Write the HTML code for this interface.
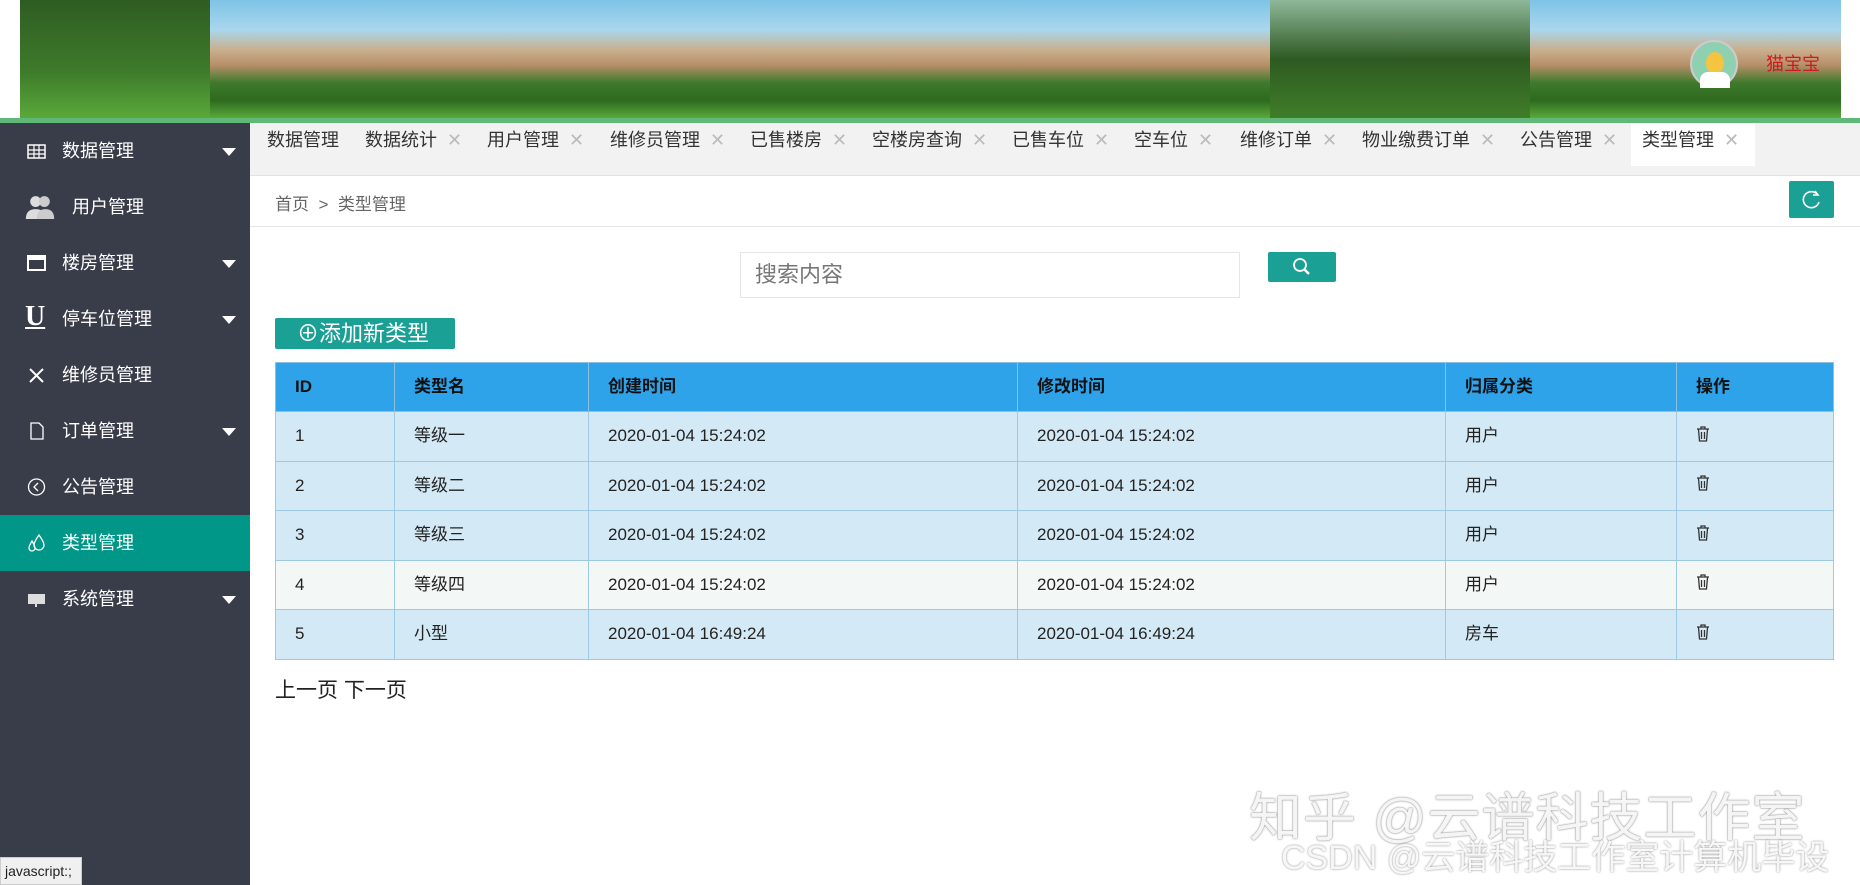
<!DOCTYPE html>
<html><head><meta charset="utf-8"><style>
*{margin:0;padding:0;box-sizing:border-box}
body{width:1860px;height:885px;overflow:hidden;background:#fff;font-family:"Liberation Sans","Noto Sans CJK SC",sans-serif;position:relative}
.hdr{position:absolute;left:20px;top:0;width:1821px;height:118px;background:linear-gradient(180deg,#7ec3e6 0%,#a9d7ee 25%,#c9b08e 42%,#b88f6a 55%,#3f7a2c 70%,#2e6a1e 85%,#5aa83a 100%)}
.hdr .t1{position:absolute;left:0;top:0;width:190px;height:118px;background:linear-gradient(180deg,#2f5c22,#3d7a2a 60%,#5aa83a)}
.hdr .t2{position:absolute;left:1250px;top:0;width:260px;height:118px;background:linear-gradient(180deg,#8fb79a,#2e5a22 50%,#3f7d28)}
.green{position:absolute;left:0;top:118px;width:1860px;height:5px;background:#5fb878}
.side{position:absolute;left:0;top:123px;width:250px;height:762px;background:#393d49}
.si{position:absolute;left:0;width:250px;height:56px;color:#fff;font-size:18px;line-height:56px;padding-left:62px}
.si.act{background:#009688}
.si .ic{position:absolute;left:27px;top:19px;width:19px;height:18px}
.si .ar{position:absolute;right:14px;top:25px;width:0;height:0;border-left:7px solid transparent;border-right:7px solid transparent;border-top:8px solid #fff}
.tabs{position:absolute;left:250px;top:123px;width:1610px;height:53px;background:#f2f2f2;border-bottom:1px solid #e2e2e2}
.tab{position:absolute;top:0;height:43px;line-height:34px;font-size:18px;color:#333}
.tab .x{color:#bbb;margin-left:10px;font-size:18px}
.tab.on{background:#fff}
.bc{position:absolute;left:275px;top:190px;font-size:17px;color:#666}
.line2{position:absolute;left:250px;top:226px;width:1610px;height:1px;background:#e6e6e6}
.ref{position:absolute;left:1789px;top:181px;width:45px;height:37px;background:#1aa094;border-radius:2px}
.inp{position:absolute;left:740px;top:252px;width:500px;height:46px;border:1px solid #e6e6e6;font-size:22px;color:#777;line-height:44px;padding-left:14px}
.sb{position:absolute;left:1268px;top:252px;width:68px;height:30px;background:#1aa094;border-radius:2px}
.add{position:absolute;left:275px;top:318px;width:180px;height:31px;background:#1aa094;color:#fff;font-size:22px;line-height:31px;padding-left:22px;border-radius:2px}
table{position:absolute;left:275px;top:362px;width:1559px;border-collapse:collapse;font-size:17px}
th,td{line-height:20px;vertical-align:middle}
th{background:#2ea3ea;color:#111;height:49px;text-align:left;padding-left:19px;border:1px solid #8cc0e0;font-weight:bold}
td{height:49.5px;padding-left:19px;border:1px solid #9ec9e2;color:#222;background:#d4e9f6}
tr.w td{background:#f3f8f7}
.pg{position:absolute;left:275px;top:674px;font-size:21px;color:#222}
.wm{position:absolute;left:1249px;top:776px;font-size:53px;color:rgba(255,255,255,.9);text-shadow:0 0 2px #999,0 0 1px #777;letter-spacing:1px;white-space:nowrap}
.wm2{position:absolute;left:1281px;top:830px;font-size:34px;color:rgba(255,255,255,.9);text-shadow:0 0 2px #888;white-space:nowrap}
.st{position:absolute;left:0;top:857px;height:28px;width:82px;background:#f0f0f0;border:1px solid #ccc;font-size:14px;line-height:26px;padding-left:4px;color:#222}
</style></head><body>
<div class="hdr"><div class="t1"></div><div class="t2"></div>
<div style="position:absolute;left:1670px;top:40px;width:48px;height:48px;border-radius:50%;background:#8fd0b0;border:2px solid #ccc"><div style="position:absolute;left:14px;top:10px;width:18px;height:22px;border-radius:50%;background:#f5c542"></div><div style="position:absolute;left:8px;top:30px;width:30px;height:16px;background:#fff;border-radius:8px 8px 0 0"></div></div>
<div style="position:absolute;left:1746px;top:50px;color:#d0191a;font-size:18px">猫宝宝</div>
</div>
<div class="green"></div>
<div class="side">
<div class="si" style="top:0"><svg class="ic" viewBox="0 0 19 18"><rect x="1" y="3" width="17" height="13" fill="none" stroke="#fff" stroke-width="1.5"/><path d="M1 8h17M1 12h17M7 3v13M12 3v13" stroke="#fff" stroke-width="1.2"/></svg>数据管理<span class="ar"></span></div>
<div class="si" style="top:56px;padding-left:72px"><svg class="ic" viewBox="0 0 26 22" style="width:30px;height:24px;left:25px;top:16px"><circle cx="9" cy="6" r="5" fill="#ddd"/><path d="M0 22q0-9 9-9t9 9z" fill="#ddd"/><circle cx="17" cy="6" r="5" fill="#ccc"/><path d="M10 22q0-9 8-9t8 9z" fill="#ccc"/></svg>用户管理</div>
<div class="si" style="top:112px"><svg class="ic" viewBox="0 0 19 18"><rect x="1" y="2" width="17" height="14" fill="none" stroke="#fff" stroke-width="2"/><rect x="1" y="2" width="17" height="4" fill="#fff"/></svg>楼房管理<span class="ar"></span></div>
<div class="si" style="top:168px"><span style="position:absolute;left:25px;top:-2px;font-family:'Liberation Serif';font-weight:bold;font-size:28px;text-decoration:underline">U</span>停车位管理<span class="ar"></span></div>
<div class="si" style="top:224px"><svg class="ic" viewBox="0 0 19 18"><path d="M3 3l13 13M16 3L3 16" stroke="#fff" stroke-width="2"/></svg>维修员管理</div>
<div class="si" style="top:280px"><svg class="ic" viewBox="0 0 19 18"><path d="M4 1h8l4 4v12H4z" fill="none" stroke="#fff" stroke-width="1.3"/></svg>订单管理<span class="ar"></span></div>
<div class="si" style="top:336px"><svg class="ic" viewBox="0 0 19 18"><circle cx="9.5" cy="9" r="8" fill="none" stroke="#fff" stroke-width="1.3"/><path d="M11 5l-4 4 4 4" fill="none" stroke="#fff" stroke-width="1.3"/></svg>公告管理</div>
<div class="si act" style="top:392px"><svg class="ic" viewBox="0 0 19 18"><path d="M12 1q5 7 5 10a5 5 0 0 1-10 0q0-3 5-10zM5 7q3 5 3 7a3 3 0 0 1-6 0q0-2 3-7z" fill="none" stroke="#fff" stroke-width="1.3"/></svg>类型管理</div>
<div class="si" style="top:448px"><svg class="ic" viewBox="0 0 19 18"><rect x="1" y="4" width="17" height="10" fill="#ddd"/><path d="M9 14v3" stroke="#ddd" stroke-width="2"/></svg>系统管理<span class="ar"></span></div>
</div>
<div class="tabs">
<div class="tab" style="left:17px">数据管理</div>
<div class="tab" style="left:115px">数据统计<span class="x">✕</span></div>
<div class="tab" style="left:237px">用户管理<span class="x">✕</span></div>
<div class="tab" style="left:360px">维修员管理<span class="x">✕</span></div>
<div class="tab" style="left:500px">已售楼房<span class="x">✕</span></div>
<div class="tab" style="left:622px">空楼房查询<span class="x">✕</span></div>
<div class="tab" style="left:762px">已售车位<span class="x">✕</span></div>
<div class="tab" style="left:884px">空车位<span class="x">✕</span></div>
<div class="tab" style="left:990px">维修订单<span class="x">✕</span></div>
<div class="tab" style="left:1112px">物业缴费订单<span class="x">✕</span></div>
<div class="tab" style="left:1270px">公告管理<span class="x">✕</span></div>
<div class="tab on" style="left:1381px;width:124px;padding-left:11px">类型管理<span class="x">✕</span></div>
</div>
<div class="bc">首页 &nbsp;&gt;&nbsp; 类型管理</div>
<div class="line2"></div>
<div class="ref"><svg viewBox="0 0 45 37" width="45" height="37"><path d="M28 13a8 8 0 1 0 2 8" fill="none" stroke="#fff" stroke-width="1.6"/><path d="M26 10l3 4-5 0" fill="none" stroke="#fff" stroke-width="1.6"/></svg></div>
<div class="inp">搜索内容</div>
<div class="sb"><svg viewBox="0 0 68 30" width="68" height="30"><circle cx="32" cy="13" r="6" fill="none" stroke="#fff" stroke-width="1.8"/><path d="M36 17l5 5" stroke="#fff" stroke-width="2.5"/></svg></div>
<div class="add">⊕添加新类型</div>
<table>
<tr><th style="width:119px">ID</th><th style="width:194px">类型名</th><th style="width:429px">创建时间</th><th style="width:428px">修改时间</th><th style="width:231px">归属分类</th><th>操作</th></tr>
<tr><td>1</td><td>等级一</td><td>2020-01-04 15:24:02</td><td>2020-01-04 15:24:02</td><td>用户</td><td><svg width="14" height="16" viewBox="0 0 14 16"><path d="M1 3h12M5 3V1h4v2M2.5 3.5l1 11.5h7l1-11.5M5.5 6v7M8.5 6v7" fill="none" stroke="#333" stroke-width="1.3"/></svg></td></tr>
<tr><td>2</td><td>等级二</td><td>2020-01-04 15:24:02</td><td>2020-01-04 15:24:02</td><td>用户</td><td><svg width="14" height="16" viewBox="0 0 14 16"><path d="M1 3h12M5 3V1h4v2M2.5 3.5l1 11.5h7l1-11.5M5.5 6v7M8.5 6v7" fill="none" stroke="#333" stroke-width="1.3"/></svg></td></tr>
<tr><td>3</td><td>等级三</td><td>2020-01-04 15:24:02</td><td>2020-01-04 15:24:02</td><td>用户</td><td><svg width="14" height="16" viewBox="0 0 14 16"><path d="M1 3h12M5 3V1h4v2M2.5 3.5l1 11.5h7l1-11.5M5.5 6v7M8.5 6v7" fill="none" stroke="#333" stroke-width="1.3"/></svg></td></tr>
<tr class="w"><td>4</td><td>等级四</td><td>2020-01-04 15:24:02</td><td>2020-01-04 15:24:02</td><td>用户</td><td><svg width="14" height="16" viewBox="0 0 14 16"><path d="M1 3h12M5 3V1h4v2M2.5 3.5l1 11.5h7l1-11.5M5.5 6v7M8.5 6v7" fill="none" stroke="#333" stroke-width="1.3"/></svg></td></tr>
<tr><td>5</td><td>小型</td><td>2020-01-04 16:49:24</td><td>2020-01-04 16:49:24</td><td>房车</td><td><svg width="14" height="16" viewBox="0 0 14 16"><path d="M1 3h12M5 3V1h4v2M2.5 3.5l1 11.5h7l1-11.5M5.5 6v7M8.5 6v7" fill="none" stroke="#333" stroke-width="1.3"/></svg></td></tr>
</table>
<div class="pg">上一页 下一页</div>
<div class="wm">知乎 @云谱科技工作室</div>
<div class="wm2">CSDN @云谱科技工作室计算机毕设</div>
<div class="st">javascript:;</div>
</body></html>
